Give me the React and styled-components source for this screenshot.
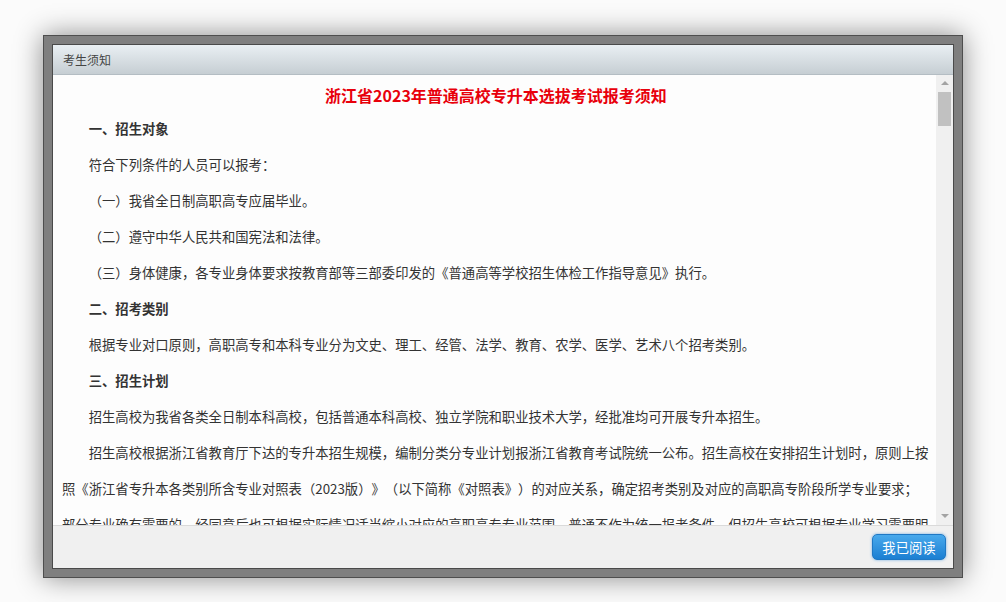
import React from 'react'
import styled, { createGlobalStyle } from 'styled-components'

const GlobalStyle = createGlobalStyle`
  html, body {
    margin: 0;
    padding: 0;
    background: #fbfbfb;
    font-family: "Noto Sans CJK SC", "Noto Sans", sans-serif;
  }
`

const Page = styled.div`
  padding: 35px 0 0 43px;
  height: 602px;
  box-sizing: border-box;
`

const Frame = styled.div`
  width: 920px;
  height: 543px;
  box-sizing: border-box;
  border: 1px solid #4e4e4e;
  background: #7f7f7f;
  padding: 8px;
  box-shadow: 0 0 26px rgba(0, 0, 0, 0.45);
`

const Panel = styled.div`
  height: 100%;
  box-sizing: border-box;
  border: 1px solid #4a4a4a;
  background: #fff;
  display: flex;
  flex-direction: column;
`

const Header = styled.div`
  height: 30px;
  box-sizing: border-box;
  flex: none;
  display: flex;
  align-items: center;
  padding-left: 10px;
  font-size: 12px;
  color: #444;
  background: linear-gradient(#e9eff3, #c6ced3);
  border-bottom: 1px solid #b4bdc3;
`

const Body = styled.div`
  flex: 1;
  display: flex;
  overflow: hidden;
  background: #fdfdfd;
`

const Article = styled.div`
  flex: 1;
  overflow: hidden;
  padding: 4px 6px 0 9px;
  color: #333;
  font-size: 13.33px;
  text-spacing-trim: space-all;
`

const Title = styled.h1`
  margin: 0;
  text-align: center;
  line-height: 32px;
  font-size: 16px;
  font-weight: bold;
  color: #e8000b;
`

const Para = styled.p`
  margin: 0;
  line-height: 36px;
  text-indent: 2em;
  font-weight: ${p => (p.$bold ? 'bold' : 'normal')};
`

const Scrollbar = styled.div`
  width: 17px;
  flex: none;
  background: #f0f0f0;
  display: flex;
  flex-direction: column;
  align-items: center;
`

const Arrow = styled.div`
  width: 0;
  height: 0;
  border-left: 4px solid transparent;
  border-right: 4px solid transparent;
  ${p => (p.$down ? 'border-top: 4px solid #a3a3a3;' : 'border-bottom: 4px solid #a3a3a3;')}
  margin: ${p => (p.$down ? '0 0 7px' : '6px 0 0')};
`

const Thumb = styled.div`
  width: 13px;
  height: 34px;
  margin-top: 7px;
  background: #c1c1c1;
`

const Spacer = styled.div`
  flex: 1;
`

const Footer = styled.div`
  height: 43px;
  box-sizing: border-box;
  flex: none;
  background: #f0f0f0;
  border-top: 1px solid #dadada;
  display: flex;
  justify-content: flex-end;
  align-items: flex-start;
  padding: 8px 7px 0 0;
`

const ReadButton = styled.button`
  width: 74px;
  height: 26px;
  border: 1px solid #1f78c4;
  border-radius: 5px;
  background: linear-gradient(#48a9ec, #1c7fd2);
  color: #fff;
  font-family: inherit;
  font-size: 13.33px;
  box-shadow: 0 0 3px rgba(30, 130, 220, 0.6);
  cursor: pointer;
  padding: 0;
`

const App = () => {
  return (
    <Page>
      <GlobalStyle />
      <Frame>
        <Panel>
          <Header>考生须知</Header>
          <Body>
            <Article>
              <Title>浙江省2023年普通高校专升本选拔考试报考须知</Title>
              <Para $bold>一、招生对象</Para>
              <Para>符合下列条件的人员可以报考：</Para>
              <Para>（一）我省全日制高职高专应届毕业。</Para>
              <Para>（二）遵守中华人民共和国宪法和法律。</Para>
              <Para>（三）身体健康，各专业身体要求按教育部等三部委印发的《普通高等学校招生体检工作指导意见》执行。</Para>
              <Para $bold>二、招考类别</Para>
              <Para>根据专业对口原则，高职高专和本科专业分为文史、理工、经管、法学、教育、农学、医学、艺术八个招考类别。</Para>
              <Para $bold>三、招生计划</Para>
              <Para>招生高校为我省各类全日制本科高校，包括普通本科高校、独立学院和职业技术大学，经批准均可开展专升本招生。</Para>
              <Para>
                招生高校根据浙江省教育厅下达的专升本招生规模，编制分类分专业计划报浙江省教育考试院统一公布。招生高校在安排招生计划时，原则上按照《浙江省专升本各类别所含专业对照表（2023版）》（以下简称《对照表》）的对应关系，确定招考类别及对应的高职高专阶段所学专业要求；部分专业确有需要的，经同意后也可根据实际情况适当缩小对应的高职高专专业范围，普通不作为统一报考条件，但招生高校可根据专业学习需要明确提出相关要求。
              </Para>
            </Article>
            <Scrollbar>
              <Arrow />
              <Thumb />
              <Spacer />
              <Arrow $down />
            </Scrollbar>
          </Body>
          <Footer>
            <ReadButton>我已阅读</ReadButton>
          </Footer>
        </Panel>
      </Frame>
    </Page>
  )
}

export default App
